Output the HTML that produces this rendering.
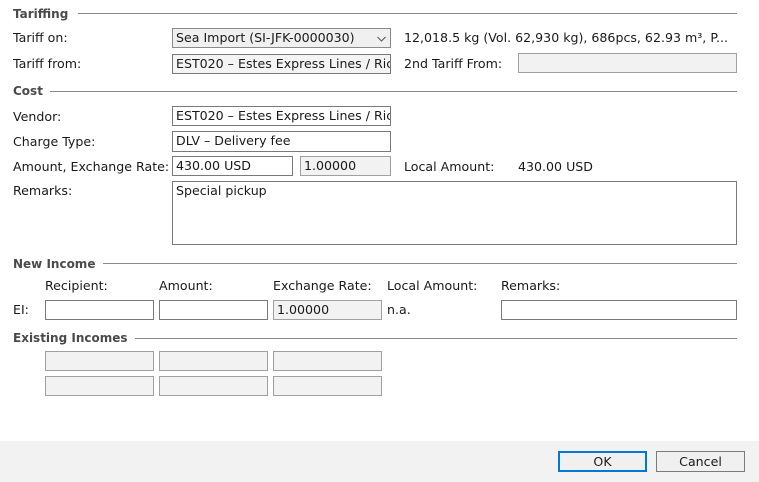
<!DOCTYPE html>
<html><head><meta charset="utf-8"><style>
*{margin:0;padding:0;box-sizing:border-box}
body{width:759px;height:482px;background:#fff;position:relative;overflow:hidden;font-family:"DejaVu Sans","Liberation Sans",sans-serif;font-size:12.6px;color:#1a1a1a}
.t{position:absolute;white-space:nowrap;line-height:14px;margin-top:1px}
.h{position:absolute;font-weight:bold;color:#4a4a4a;line-height:14px;white-space:nowrap;font-size:12px}
.l{position:absolute;height:1px;background:#8a8a8a}
.b{position:absolute;border:1px solid #7a7a7a;background:#fff;padding-left:3px;line-height:18px;white-space:nowrap;overflow:hidden}
.g{background:#f2f2f2;border-color:#a0a0a0}
</style></head><body>
<div class="h" style="left:13px;top:7px">Tariffing</div><div class="l" style="left:78px;top:13px;width:659px"></div>
<div class="t" style="left:13px;top:30px">Tariff on:</div>
<div class="b g" style="left:172px;top:28px;width:219px;height:20px;border-color:#8a8a8a;background:#f0f0f0">Sea Import (SI-JFK-0000030)<svg style="position:absolute;right:4px;top:7px" width="9" height="6" viewBox="0 0 9 6"><path d="M0.5 1 L4.5 5 L8.5 1" fill="none" stroke="#555" stroke-width="1"/></svg></div>
<div class="t" style="left:404px;top:30px">12,018.5 kg (Vol. 62,930 kg), 686pcs, 62.93 m³, P...</div>
<div class="t" style="left:13px;top:56px">Tariff from:</div>
<div class="b" style="left:172px;top:54px;width:219px;height:20px;background:#f4f4f4">EST020 – Estes Express Lines / Ric</div>
<div class="t" style="left:404px;top:56px">2nd Tariff From:</div>
<div class="b g" style="left:518px;top:53px;width:219px;height:20px"></div>

<div class="h" style="left:13px;top:84px">Cost</div><div class="l" style="left:50px;top:91px;width:687px"></div>
<div class="t" style="left:13px;top:109px">Vendor:</div>
<div class="b" style="left:172px;top:106px;width:219px;height:20px">EST020 – Estes Express Lines / Ric</div>
<div class="t" style="left:13px;top:134px">Charge Type:</div>
<div class="b" style="left:172px;top:131px;width:219px;height:21px">DLV – Delivery fee</div>
<div class="t" style="left:13px;top:159px">Amount, Exchange Rate:</div>
<div class="b" style="left:172px;top:156px;width:121px;height:20px">430.00 USD</div>
<div class="b g" style="left:300px;top:156px;width:91px;height:20px">1.00000</div>
<div class="t" style="left:404px;top:159px">Local Amount:</div>
<div class="t" style="left:518px;top:159px">430.00 USD</div>
<div class="t" style="left:13px;top:183px">Remarks:</div>
<div class="b" style="left:172px;top:181px;width:565px;height:64px;line-height:18px">Special pickup</div>

<div class="h" style="left:13px;top:257px">New Income</div><div class="l" style="left:103px;top:263px;width:634px"></div>
<div class="t" style="left:45px;top:278px">Recipient:</div>
<div class="t" style="left:159px;top:278px">Amount:</div>
<div class="t" style="left:273px;top:278px">Exchange Rate:</div>
<div class="t" style="left:387px;top:278px">Local Amount:</div>
<div class="t" style="left:501px;top:278px">Remarks:</div>
<div class="t" style="left:13px;top:302px">EI:</div>
<div class="b" style="left:45px;top:300px;width:109px;height:20px"></div>
<div class="b" style="left:159px;top:300px;width:109px;height:20px"></div>
<div class="b g" style="left:273px;top:300px;width:109px;height:20px">1.00000</div>
<div class="t" style="left:387px;top:302px">n.a.</div>
<div class="b" style="left:501px;top:300px;width:236px;height:20px"></div>

<div class="h" style="left:13px;top:331px">Existing Incomes</div><div class="l" style="left:135px;top:338px;width:602px"></div>
<div class="b g" style="left:45px;top:351px;width:109px;height:20px"></div>
<div class="b g" style="left:159px;top:351px;width:109px;height:20px"></div>
<div class="b g" style="left:273px;top:351px;width:109px;height:20px"></div>
<div class="b g" style="left:45px;top:376px;width:109px;height:20px"></div>
<div class="b g" style="left:159px;top:376px;width:109px;height:20px"></div>
<div class="b g" style="left:273px;top:376px;width:109px;height:20px"></div>

<div style="position:absolute;left:0;top:441px;width:759px;height:41px;background:#f2f2f2"></div>
<div style="position:absolute;left:558px;top:451px;width:89px;height:21px;border:2px solid #0078d7;background:#f0f0f0;text-align:center;line-height:17px">OK</div>
<div style="position:absolute;left:656px;top:451px;width:89px;height:21px;border:1px solid #7a7a7a;background:#f0f0f0;text-align:center;line-height:19px">Cancel</div>
</body></html>
